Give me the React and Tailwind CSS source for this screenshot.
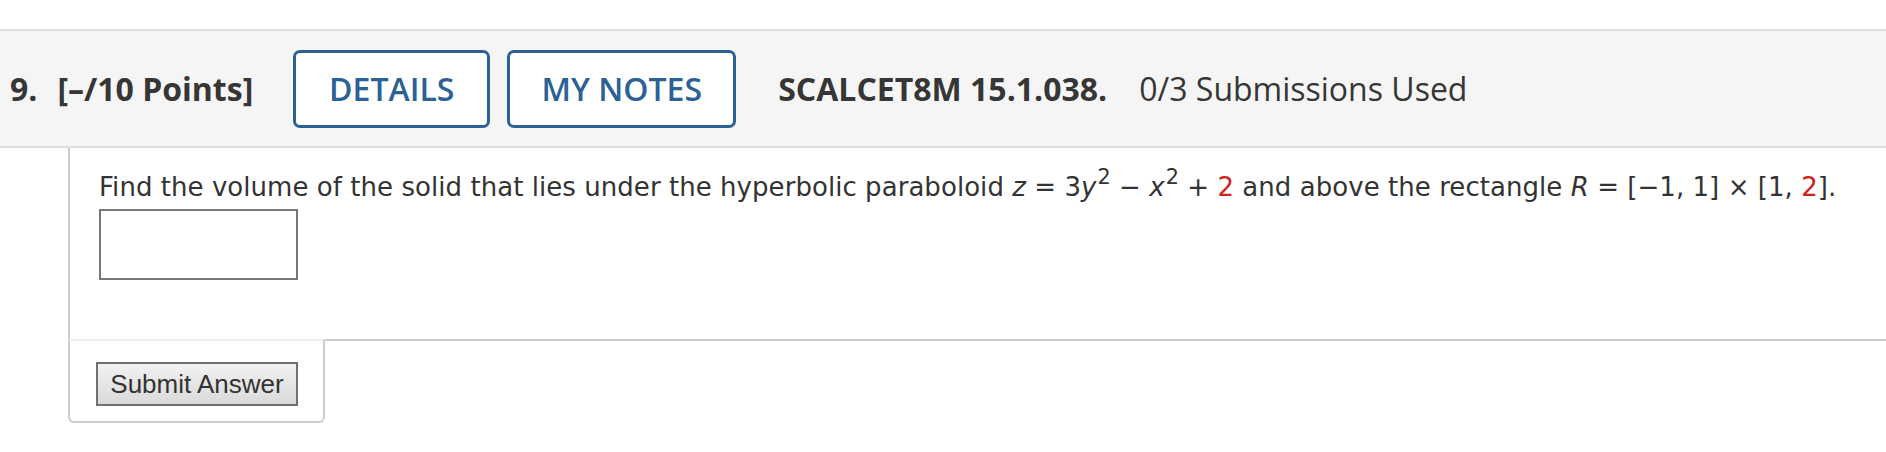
import { useState } from "react";

const mathFont = { fontFamily: '"DejaVu Sans", Verdana, sans-serif' };

function Sup({ children }) {
  return <sup className="top-[-0.6em] ml-[1px] text-[0.8em]">{children}</sup>;
}

function QuestionHeader() {
  return (
    <div className="flex h-[119px] items-center border-y-2 border-[#dddddd] bg-[#f5f5f5] pl-[10px] font-['Open_Sans',sans-serif] text-[32px] text-[#363636]">
      <span className="font-bold">9.</span>
      <span className="ml-[20px] font-bold">[–/10 Points]</span>
      <button
        type="button"
        className="ml-[40px] flex h-[78px] w-[197px] items-center justify-center rounded-[7px] border-[3px] border-[#2c6195] bg-white text-[32px] font-semibold text-[#2c6195]"
      >
        DETAILS
      </button>
      <button
        type="button"
        className="ml-[17px] flex h-[78px] w-[229px] items-center justify-center rounded-[7px] border-[3px] border-[#2c6195] bg-white text-[32px] font-semibold text-[#2c6195]"
      >
        MY NOTES
      </button>
      <span className="ml-[42px] font-bold">SCALCET8M 15.1.038.</span>
      <span className="ml-[32px]">0/3 Submissions Used</span>
    </div>
  );
}

export default function App() {
  const [answer, setAnswer] = useState("");

  return (
    <div className="h-[452px] w-[1886px] overflow-hidden bg-white">
      <div className="h-[29px]" />
      <QuestionHeader />

      <div className="ml-[68px]">
        <div className="h-[191px] border-l-2 border-[#cccccc] pl-[29px] pt-[20px] text-[#333333]" style={mathFont}>
          <p className="whitespace-nowrap text-[26px] leading-[38px] tracking-[0.05px]">
            Find the volume of the solid that lies under the hyperbolic paraboloid{" "}
            <i>z</i> = 3<i>y</i>
            <Sup>2</Sup> − <i>x</i>
            <Sup>2</Sup> + <span className="text-[#d0201a]">2</span> and above the rectangle{" "}
            <i>R</i> = [−1, 1] × [1, <span className="text-[#d0201a]">2</span>].
          </p>
          <input
            type="text"
            value={answer}
            onChange={(e) => setAnswer(e.target.value)}
            className="mt-[3px] block h-[71px] w-[199px] border-2 border-[#777777] bg-white px-2 text-[24px] outline-none"
          />
        </div>

        <div className="flex">
          <div className="h-[84px] w-[257px] rounded-b-[6px] border-2 border-[#cccccc] border-t-[#eeeeee] pl-[26px] pt-[21px]">
            <button
              type="button"
              className="h-[44px] w-[202px] border-2 border-[#707070] bg-gradient-to-b from-[#f2f2f2] to-[#d9d9d9] font-['Liberation_Sans',Arial,sans-serif] text-[26px] leading-none text-[#333333]"
            >
              Submit Answer
            </button>
          </div>
          <div className="flex-1 border-t-2 border-[#cccccc]" />
        </div>
      </div>
    </div>
  );
}
